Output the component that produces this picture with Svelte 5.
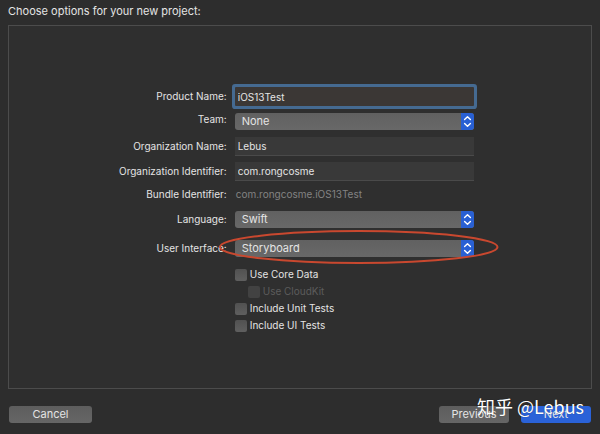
<script lang="ts">
	let productName = $state('iOS13Test');
	let organizationName = $state('Lebus');
	let organizationId = $state('com.rongcosme');
	let team = $state('None');
	let language = $state('Swift');
	let userInterface = $state('Storyboard');
	let useCoreData = $state(false);
	let useCloudKit = $state(false);
	let unitTests = $state(false);
	let uiTests = $state(false);

	const bundleId = $derived(`${organizationId}.${productName}`);
</script>

{#snippet arrows()}
	<span class="arrows">
		<svg viewBox="0 0 13 17" aria-hidden="true">
			<path d="M3.6 6.6 6.5 3.7l2.9 2.9M3.6 10.4l2.9 2.9 2.9-2.9" />
		</svg>
	</span>
{/snippet}

<main class="dialog">
	<h1>Choose options for your new project:</h1>

	<form class="panel">
		<div class="row">
			<label for="product">Product Name:</label>
			<input id="product" class="field focused" type="text" bind:value={productName} />
		</div>
		<div class="row raised">
			<label for="team">Team:</label>
			<div class="popup">
				<select id="team" bind:value={team}>
					<option>None</option>
				</select>
				{@render arrows()}
			</div>
		</div>
		<div class="row">
			<label for="org-name">Organization Name:</label>
			<input id="org-name" class="field" type="text" bind:value={organizationName} />
		</div>
		<div class="row">
			<label for="org-id">Organization Identifier:</label>
			<input id="org-id" class="field" type="text" bind:value={organizationId} />
		</div>
		<div class="row short">
			<label for="bundle">Bundle Identifier:</label>
			<output id="bundle">{bundleId}</output>
		</div>
		<div class="row language">
			<label for="language">Language:</label>
			<div class="popup">
				<select id="language" bind:value={language}>
					<option>Swift</option>
					<option>Objective-C</option>
				</select>
				{@render arrows()}
			</div>
		</div>
		<div class="row interface">
			<label for="interface">User Interface:</label>
			<div class="popup">
				<select id="interface" bind:value={userInterface}>
					<option>Storyboard</option>
					<option>SwiftUI</option>
				</select>
				{@render arrows()}
				<svg class="marker" viewBox="0 0 280 34" preserveAspectRatio="none" aria-hidden="true">
					<ellipse cx="140" cy="17" rx="139" ry="16" />
				</svg>
			</div>
		</div>
		<div class="row checks">
			<div class="options">
				<label><input type="checkbox" bind:checked={useCoreData} />Use Core Data</label>
				<label class="nested">
					<input type="checkbox" bind:checked={useCloudKit} disabled={!useCoreData} />Use CloudKit
				</label>
				<label><input type="checkbox" bind:checked={unitTests} />Include Unit Tests</label>
				<label><input type="checkbox" bind:checked={uiTests} />Include UI Tests</label>
			</div>
		</div>
	</form>

	<footer>
		<button class="cancel" type="button">Cancel</button>
		<button type="button">Previous</button>
		<button class="next" type="button">Next</button>
		<span class="watermark">知乎 @Lebus</span>
	</footer>
</main>

<style>
	:global(body) {
		margin: 0;
		background: #2d2d2d;
	}

	.dialog {
		box-sizing: border-box;
		display: flex;
		flex-direction: column;
		min-height: 100vh;
		padding: 4px 8px 11px;
		background: #2d2d2d;
		color: #e4e4e4;
		font-family: Inter, 'Liberation Sans', sans-serif;
		font-size: 11px;
		line-height: 15px;
	}

	h1 {
		margin: 0 0 6px;
		font-size: 11px;
		font-weight: 400;
	}

	.panel {
		flex: 1;
		display: flex;
		flex-direction: column;
		gap: 6px;
		padding: 61px 20% 20px 0;
		border: 1px solid #4c4c4c;
		background: #2f2f2f;
		font-size: 10px;
	}

	.row {
		display: grid;
		grid-template-columns: 10fr 11fr;
		column-gap: 8px;
		align-items: center;
		height: 19px;
	}

	.row > label {
		text-align: right;
		white-space: nowrap;
	}

	.raised > label {
		padding-bottom: 4px;
	}

	.row.short {
		height: 15px;
	}

	.language {
		margin-top: 2px;
	}

	.interface {
		margin-top: 4px;
	}

	.row.checks {
		height: auto;
		margin-top: 2px;
	}

	input,
	select,
	button {
		margin: 0;
		color: inherit;
		font: inherit;
		outline: none;
	}

	.field {
		box-sizing: border-box;
		width: 100%;
		height: 19px;
		padding: 0 3px;
		border: 0;
		border-bottom: 1px solid #4a4a4a;
		background: #393939;
	}

	.field.focused {
		border: 0;
		border-radius: 1px;
		background: #3b3735;
		box-shadow: 0 0 0 3px #456a91;
	}

	output {
		padding-left: 1px;
		color: #838383;
	}

	.popup {
		position: relative;
		display: flex;
		height: 17px;
	}

	select {
		appearance: none;
		width: 100%;
		padding: 0 18px 0 7px;
		border: 0;
		border-radius: 3px;
		background: linear-gradient(#616161, #686868);
		font-size: 11px;
	}

	.arrows {
		position: absolute;
		top: 0;
		right: 0;
		width: 13px;
		height: 17px;
		border-radius: 0 3px 3px 0;
		background: #2960d3;
		pointer-events: none;
	}

	.arrows svg {
		display: block;
	}

	.arrows path {
		fill: none;
		stroke: #fff;
		stroke-width: 1.4;
		stroke-linecap: round;
		stroke-linejoin: round;
	}

	/* hand-drawn ring round the User Interface popup */
	.marker {
		position: absolute;
		top: -10px;
		left: -16px;
		width: calc(100% + 40px);
		height: 34px;
		overflow: visible;
		pointer-events: none;
	}

	.marker ellipse {
		fill: none;
		stroke: #c9482f;
		stroke-width: 2;
	}

	.options {
		grid-column: 2;
		display: flex;
		flex-direction: column;
	}

	.options label {
		display: flex;
		align-items: center;
		gap: 3px;
		height: 17px;
		white-space: nowrap;
	}

	.options input {
		appearance: none;
		width: 12px;
		height: 12px;
		border-radius: 2px;
		background: linear-gradient(#515151, #5f5f5f);
	}

	.options input:checked {
		background: #2960d3;
	}

	.options .nested {
		padding-left: 13px;
		color: #5c5c5c;
	}

	.options input:disabled {
		background: #424242;
	}

	footer {
		position: relative;
		display: flex;
		gap: 12px;
		padding: 17px 1px 0;
	}

	button {
		width: 70px;
		height: 17px;
		padding: 0;
		border: 0;
		border-radius: 3px;
		background: linear-gradient(#5d5d5d, #666);
	}

	.cancel {
		width: 83px;
		margin-right: auto;
	}

	.next {
		background: #2a62d8;
	}

	.watermark {
		position: absolute;
		right: 8px;
		bottom: 4px;
		color: #fff;
		font-family: 'Noto Sans CJK SC', sans-serif;
		font-size: 18px;
		line-height: 26px;
		white-space: nowrap;
		text-shadow: 0 0 1px rgba(0, 0, 0, 0.5);
		pointer-events: none;
	}
</style>
